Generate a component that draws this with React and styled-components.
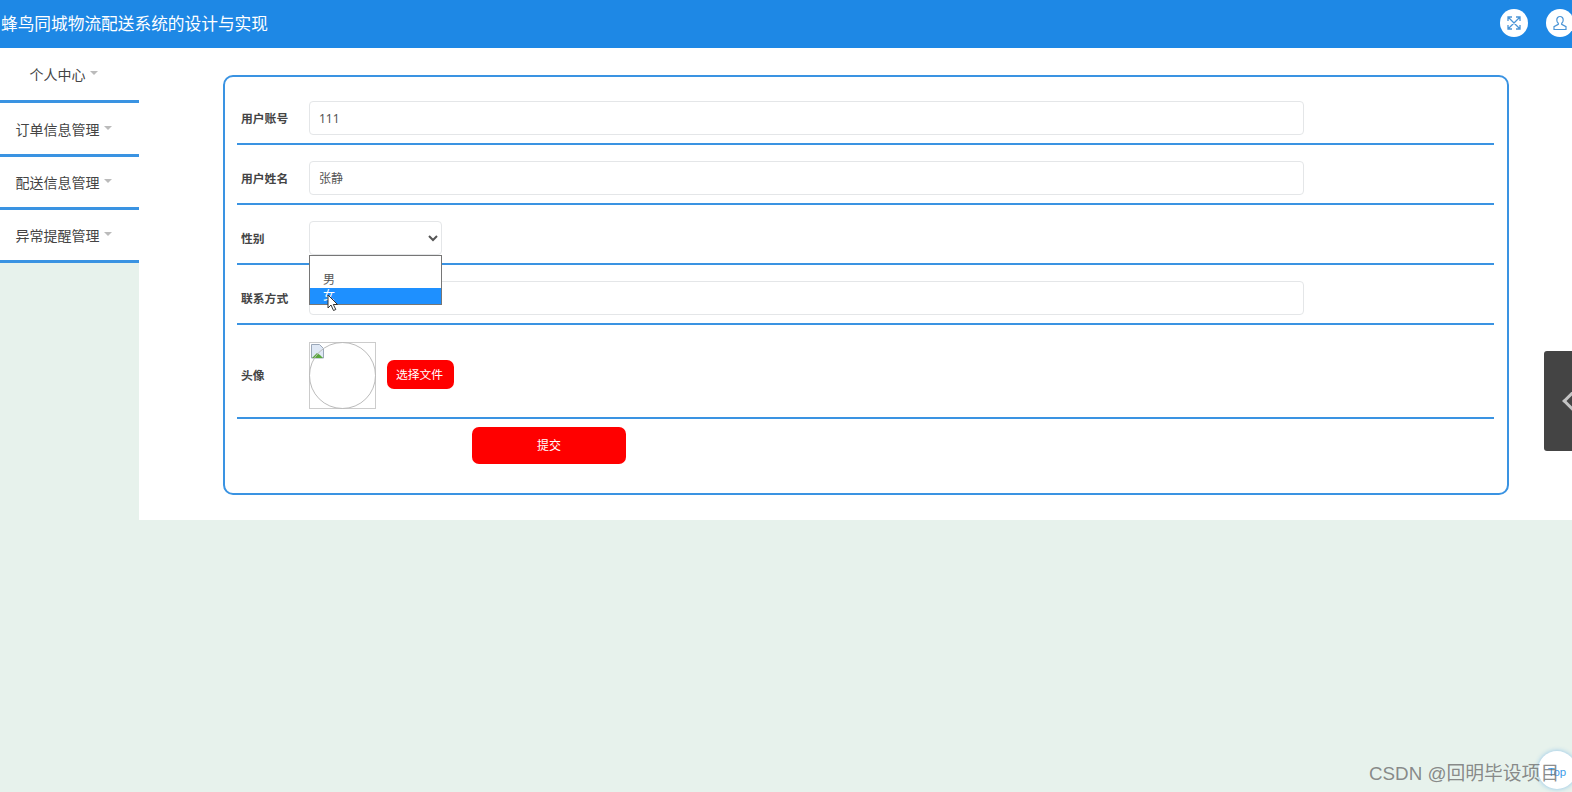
import styled, { createGlobalStyle } from "styled-components";

const GlobalStyle = createGlobalStyle`
  html, body {
    margin: 0;
    padding: 0;
    height: 100%;
    background: #e7f2ec;
    font-family: "Liberation Sans", "Noto Sans CJK SC", sans-serif;
  }
  * { box-sizing: border-box; }
`;

const Page = styled.div`
  position: relative;
  width: 1572px;
  height: 792px;
  overflow: hidden;
`;

const TopBar = styled.header`
  height: 48px;
  background: #1e88e5;
  display: flex;
  align-items: center;
  justify-content: space-between;
  padding: 0 0 2px 1px;
`;

const Title = styled.h1`
  margin: 0;
  font-size: 16.7px;
  font-weight: 400;
  color: #fff;
`;

const TopActions = styled.div`
  display: flex;
  gap: 18px;
  margin-right: -2px;
  padding-bottom: 1px;
`;

const RoundIcon = styled.span`
  width: 28px;
  height: 28px;
  border-radius: 50%;
  background: #fff;
  display: flex;
  align-items: center;
  justify-content: center;
  color: #4a94d6;
`;

const Layout = styled.div`
  display: flex;
  align-items: flex-start;
`;

const Sidebar = styled.nav`
  width: 139px;
  flex: none;
`;

const NavItem = styled.div`
  height: ${(p) => p.$h}px;
  background: #fff;
  border-bottom: 3px solid #3a93e2;
  display: flex;
  align-items: center;
  justify-content: center;
  gap: 4px;
  font-size: 14px;
  color: #444;
  padding-right: 12px;
`;

const Caret = styled.i`
  width: 0;
  height: 0;
  border-left: 4px solid transparent;
  border-right: 4px solid transparent;
  border-top: 4px solid #bbb;
  margin-bottom: 2px;
`;

const Main = styled.main`
  flex: 1;
  height: 472px;
  background: #fff;
  padding: 27px 63px 0 84px;
`;

const Card = styled.form`
  height: 420px;
  border: 2px solid #3a93e2;
  border-radius: 10px;
  padding: 0 13px 0 12px;
`;

const Row = styled.div`
  height: 60px;
  border-bottom: 2px solid #3a93e2;
  display: flex;
  align-items: center;
  padding: 16px 0 8px 4px;
`;

const FirstRow = styled(Row)`
  height: 68px;
  padding-top: 24px;
`;

const AvatarRow = styled(Row)`
  height: 94px;
  padding-top: 17px;
`;

const Label = styled.label`
  width: 68px;
  flex: none;
  margin-bottom: 2px;
  font-size: 11.8px;
  font-weight: 700;
  color: #444;
`;

const TextInput = styled.input`
  width: 995px;
  height: 34px;
  border: 1px solid #e4e6e8;
  border-radius: 4px;
  padding: 0 9px;
  font: 12px "Noto Sans", "Noto Sans CJK SC", sans-serif;
  color: #555;
  background: #fff;
  outline: none;
`;

const SelectWrap = styled.div`
  position: relative;
  width: 133px;
`;

const GenderSelect = styled.select`
  display: block;
  width: 133px;
  height: 34px;
  border: 1px solid #e4e6e8;
  border-radius: 4px;
  background: #fff;
  outline: none;
  color: #555;
`;

const OptionList = styled.ul`
  position: absolute;
  z-index: 2;
  left: 0;
  top: 34px;
  width: 133px;
  height: 50px;
  margin: 0;
  padding: 0;
  list-style: none;
  background: #fff;
  border: 1px solid #767676;
  font-size: 12px;
  color: #555;
`;

const OptionItem = styled.li`
  height: 16px;
  line-height: 16px;
  padding-left: 13px;
  background: ${(p) => (p.$active ? "#1e90ff" : "transparent")};
  color: ${(p) => (p.$active ? "#fff" : "inherit")};
`;

const AvatarBox = styled.div`
  position: relative;
  width: 67px;
  height: 67px;
  border: 1px solid #ccc;
  flex: none;
`;

const AvatarCircle = styled.div`
  position: absolute;
  inset: -1px;
  border: 1px solid #bbb;
  border-radius: 50%;
`;

const BrokenImage = styled.svg`
  position: absolute;
  left: 1px;
  top: 1px;
`;

const FileButton = styled.button`
  width: 67px;
  height: 29px;
  margin: 0 0 2px 11px;
  border: 0;
  border-radius: 7px;
  background: #f00;
  color: #fff;
  padding: 0 2px 2px 0;
  font: 11.8px "Liberation Sans", "Noto Sans CJK SC", sans-serif;
`;

const SubmitRow = styled.div`
  padding: 8px 0 0 235px;
`;

const SubmitButton = styled.button`
  width: 154px;
  height: 37px;
  border: 0;
  border-radius: 7px;
  background: #f00;
  color: #fff;
  padding: 0 0 2px;
  font: 12px "Liberation Sans", "Noto Sans CJK SC", sans-serif;
`;

const Cursor = styled.svg`
  position: absolute;
  z-index: 3;
  left: 327px;
  top: 294px;
`;

const SideTab = styled.div`
  position: absolute;
  right: 0;
  top: 351px;
  width: 28px;
  height: 100px;
  background: #444;
  border-radius: 3px 0 0 3px;
  display: flex;
  align-items: center;
  padding-left: 22px;
`;

const TabArrow = styled.i`
  width: 18px;
  height: 18px;
  flex: none;
  border-left: 3px solid #c4c4c4;
  border-bottom: 3px solid #c4c4c4;
  transform: rotate(45deg);
`;

const TopButton = styled.div`
  position: absolute;
  left: 1538px;
  top: 751px;
  width: 38px;
  height: 38px;
  padding-top: 3px;
  border-radius: 50%;
  background: #fff;
  box-shadow: 0 0 5px rgba(30, 136, 229, 0.45);
  display: flex;
  align-items: center;
  justify-content: center;
  color: #3d9be9;
  font-size: 11.5px;
`;

const Watermark = styled.div`
  position: absolute;
  z-index: 2;
  left: 1369px;
  top: 758px;
  font-size: 18.8px;
  color: rgba(110, 110, 110, 0.8);
  white-space: nowrap;
`;

const navItems = [
  { name: "个人中心", h: 55 },
  { name: "订单信息管理", h: 54 },
  { name: "配送信息管理", h: 53 },
  { name: "异常提醒管理", h: 53 },
];

const ExpandIcon = () => (
  <svg width="16" height="16" viewBox="0 0 16 16" fill="none" stroke="currentColor" strokeWidth="1.3">
    <path d="M2 6V2h4M10 2h4v4M14 10v4h-4M6 14H2v-4M2.500 2.500l11 11M13.500 2.500l-11 11" />
  </svg>
);

const UserIcon = () => (
  <svg width="16" height="16" viewBox="0 0 16 16" fill="none" stroke="currentColor" strokeWidth="1.2">
    <path d="M8 1.500c-2 0-3.200 1.500-3.200 3.400 0 1.400.6 2.600 1.500 3.300v1.200L2 11.600v2.900h12v-2.900L9.700 9.400V8.200c.9-.7 1.500-1.900 1.500-3.300C11.200 3 10 1.500 8 1.500z" />
  </svg>
);

export default function App() {
  return (
    <Page>
      <GlobalStyle />
      <TopBar>
        <Title>蜂鸟同城物流配送系统的设计与实现</Title>
        <TopActions>
          <RoundIcon><ExpandIcon /></RoundIcon>
          <RoundIcon><UserIcon /></RoundIcon>
        </TopActions>
      </TopBar>
      <Layout>
        <Sidebar>
          {navItems.map((item) => (
            <NavItem key={item.name} $h={item.h}>
              {item.name}
              <Caret />
            </NavItem>
          ))}
        </Sidebar>
        <Main>
          <Card onSubmit={(e) => e.preventDefault()}>
            <FirstRow>
              <Label>用户账号</Label>
              <TextInput defaultValue="111" />
            </FirstRow>
            <Row>
              <Label>用户姓名</Label>
              <TextInput defaultValue="张静" />
            </Row>
            <Row>
              <Label>性别</Label>
              <SelectWrap>
                <GenderSelect defaultValue="">
                  <option value=""></option>
                  <option value="男">男</option>
                  <option value="女">女</option>
                </GenderSelect>
                <OptionList>
                  <OptionItem />
                  <OptionItem>男</OptionItem>
                  <OptionItem $active>女</OptionItem>
                </OptionList>
              </SelectWrap>
            </Row>
            <Row>
              <Label>联系方式</Label>
              <TextInput />
            </Row>
            <AvatarRow>
              <Label>头像</Label>
              <AvatarBox>
                <BrokenImage width="14" height="15" viewBox="0 0 14 15">
                  <path d="M.5.500h8l4 4v9.500H.5z" fill="#dfe8f5" stroke="#9aa7b8" />
                  <path d="M1 14l5-5 3 2 3 3z" fill="#5aa83c" />
                </BrokenImage>
                <AvatarCircle />
              </AvatarBox>
              <FileButton type="button">选择文件</FileButton>
            </AvatarRow>
            <SubmitRow>
              <SubmitButton type="submit">提交</SubmitButton>
            </SubmitRow>
          </Card>
        </Main>
      </Layout>
      <Cursor width="12" height="18" viewBox="0 0 12 18">
        <path d="M1 1v13l3-3 2.500 5.500 2.300-1L6.300 10.500H10.500z" fill="#fff" stroke="#333" strokeWidth="1" />
      </Cursor>
      <SideTab><TabArrow /></SideTab>
      <TopButton>Top</TopButton>
      <Watermark>CSDN @回明毕设项目</Watermark>
    </Page>
  );
}
